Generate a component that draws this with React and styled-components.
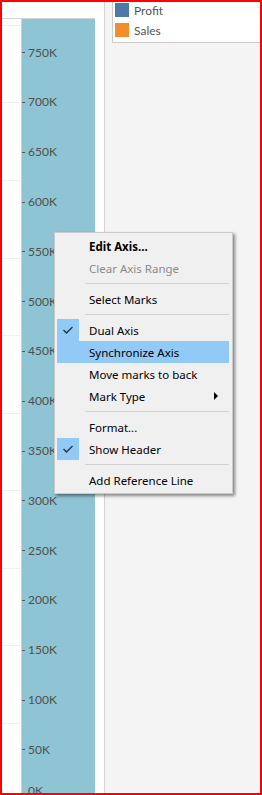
import React from "react";
import styled, { createGlobalStyle } from "styled-components";

const GlobalStyle = createGlobalStyle`
  html, body {
    margin: 0;
    padding: 0;
    background: #fff;
  }
  body {
    font-family: "Noto Sans", "Open Sans", sans-serif;
  }
`;

const Frame = styled.div`
  position: relative;
  width: 262px;
  height: 795px;
  box-sizing: border-box;
  border: 2px solid #ff0000;
  display: flex;
  overflow: hidden;
  background: #f4f4f4;
`;

const ChartPane = styled.div`
  width: 103px;
  flex-shrink: 0;
  background: #fff;
  border-right: 1px solid #d4d4d4;
  box-sizing: border-box;
  padding-top: 16px;
`;

const PlotArea = styled.div`
  width: 93px;
  height: 800px;
  border-top: 1px solid #d4d4d4;
  display: flex;
`;

const GridZone = styled.div`
  width: 19px;
  flex-shrink: 0;
  border-right: 1px solid #cfcfcf;
  background-image: repeating-linear-gradient(
    to bottom,
    transparent 0px,
    transparent 6px,
    #f0f0f0 6px,
    #f0f0f0 7px,
    transparent 7px,
    transparent 77.5px
  );
`;

const AxisBar = styled.div`
  flex: 1;
  background: #8ec4d3;
  display: flex;
  flex-direction: column;
  padding-top: 8.8px;
`;

const TickRow = styled.div`
  height: 49.8px;
  flex-shrink: 0;
  display: flex;
  align-items: center;
`;

const TickMark = styled.span`
  width: 3px;
  height: 1px;
  background: #555;
  margin-right: 3px;
`;

const TickLabel = styled.span`
  font-family: Lato, "Open Sans", sans-serif;
  font-size: 12px;
  color: #4f4f4f;
  line-height: 12px;
  margin-top: ${(p) => (p.$edge ? "-18px" : "0")};
`;

const SidePanel = styled.div`
  flex: 1;
  padding-left: 7px;
`;

const LegendBox = styled.div`
  height: 39px;
  background: #fff;
  border-left: 1px solid #cccccc;
  border-bottom: 1px solid #cccccc;
  padding: 1px 0 0 2px;
  box-sizing: content-box;
`;

const LegendRow = styled.div`
  height: 14px;
  margin-bottom: 6px;
  display: flex;
  align-items: center;
  gap: 5px;
`;

const Swatch = styled.span`
  width: 14px;
  height: 14px;
  background: ${(p) => p.$color};
`;

const LegendText = styled.span`
  font-family: Lato, "Open Sans", sans-serif;
  font-size: 12px;
  color: #555;
`;

const Menu = styled.div`
  position: absolute;
  left: 52px;
  top: 230px;
  width: 179px;
  box-sizing: border-box;
  background: #f0f0f0;
  border: 1px solid #cbcbcb;
  padding: 2px 3px 2px 2px;
  box-shadow: 2px 2px 3px rgba(0, 0, 0, 0.45);
  font-family: "Noto Sans", "Open Sans", sans-serif;
  font-size: 11.5px;
`;

const Item = styled.div`
  height: 22px;
  display: flex;
  align-items: center;
  background: ${(p) => (p.$hover ? "#91c9f7" : "transparent")};
  color: ${(p) => (p.$disabled ? "#8a8a8a" : "#000")};
  font-weight: ${(p) => (p.$bold ? 700 : 400)};
  white-space: nowrap;
`;

const CheckCell = styled.span`
  width: 22px;
  height: 22px;
  flex-shrink: 0;
  display: flex;
  align-items: center;
  justify-content: center;
  background: ${(p) => (p.$on ? "#91c9f7" : "transparent")};
  margin-right: 10px;
`;

const Label = styled.span`
  flex: 1;
`;

const SubArrow = styled.span`
  width: 0;
  height: 0;
  border-top: 4px solid transparent;
  border-bottom: 4px solid transparent;
  border-left: 4px solid #000;
  margin-right: 11px;
`;

const Separator = styled.div`
  padding: 4px 0;
  margin-left: 28px;
  &::after {
    content: "";
    display: block;
    border-top: 1px solid #d2d2d2;
  }
`;

const Check = () => (
  <svg width="12" height="10" viewBox="0 0 12 10">
    <polyline points="1.5,5 4.5,8 10.5,2" fill="none" stroke="#333" strokeWidth="1.4" />
  </svg>
);

const ticks = ["750K", "700K", "650K", "600K", "550K", "500K", "450K", "400K", "350K", "300K", "250K", "200K", "150K", "100K", "50K", "0K"];

const menu = [
  { label: "Edit Axis...", bold: true },
  { label: "Clear Axis Range", disabled: true },
  { sep: true },
  { label: "Select Marks" },
  { sep: true },
  { label: "Dual Axis", checked: true },
  { label: "Synchronize Axis", hover: true },
  { label: "Move marks to back" },
  { label: "Mark Type", sub: true },
  { sep: true },
  { label: "Format..." },
  { label: "Show Header", checked: true },
  { sep: true },
  { label: "Add Reference Line" },
];

export default function App() {
  return (
    <>
      <GlobalStyle />
      <Frame>
        <ChartPane>
          <PlotArea>
            <GridZone />
            <AxisBar>
              {ticks.map((t, i) => (
                <TickRow key={t}>
                  <TickMark />
                  <TickLabel $edge={i === ticks.length - 1}>{t}</TickLabel>
                </TickRow>
              ))}
            </AxisBar>
          </PlotArea>
        </ChartPane>
        <SidePanel>
          <LegendBox>
            <LegendRow>
              <Swatch $color="#4e79a7" />
              <LegendText>Profit</LegendText>
            </LegendRow>
            <LegendRow>
              <Swatch $color="#f28e2b" />
              <LegendText>Sales</LegendText>
            </LegendRow>
          </LegendBox>
        </SidePanel>
        <Menu>
          {menu.map((m, i) =>
            m.sep ? (
              <Separator key={i} />
            ) : (
              <Item key={i} $hover={m.hover} $disabled={m.disabled} $bold={m.bold}>
                <CheckCell $on={m.checked}>{m.checked && <Check />}</CheckCell>
                <Label>{m.label}</Label>
                {m.sub && <SubArrow />}
              </Item>
            )
          )}
        </Menu>
      </Frame>
    </>
  );
}
